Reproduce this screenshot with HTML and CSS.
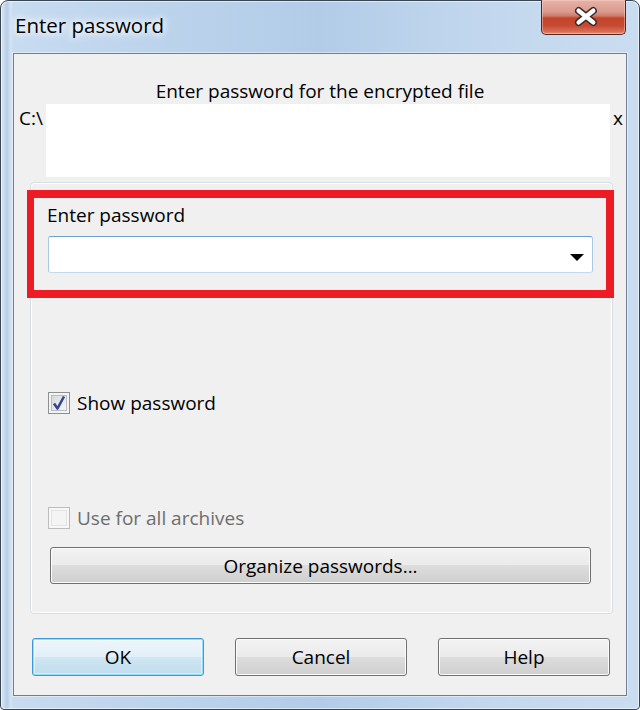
FILE: index.html
```html
<!DOCTYPE html>
<html lang="en">
<head>
<meta charset="utf-8">
<title>Enter password</title>
<link rel="stylesheet" href="styles.css">
</head>
<body>
<div class="window">
  <div class="titlebar">
    <div class="title">Enter password</div>
    <div class="close">
      <svg width="85" height="35" viewBox="0 0 85 35">
        <path d="M37.5 10.5 L52.5 22.5 M52.5 10.5 L37.5 22.5" stroke="#3a2c2a" stroke-width="7.5" stroke-linecap="round" fill="none"/>
        <path d="M37.5 10.5 L52.5 22.5 M52.5 10.5 L37.5 22.5" stroke="#ffffff" stroke-width="4.5" stroke-linecap="round" fill="none"/>
      </svg>
    </div>
  </div>
  <div class="client">
    <div class="instruction">Enter password for the encrypted file</div>
    <div class="path-row">
      <span class="path-text">C:\</span>
      <div class="redact"></div>
      <span class="path-text">x</span>
    </div>
    <div class="group">
      <div class="highlight">
        <div class="label">Enter password</div>
        <div class="combo">
          <svg class="arrow" width="14" height="7" viewBox="0 0 14 7"><polygon points="0,0 14,0 7,7" fill="#000"/></svg>
        </div>
      </div>
      <div class="check first">
        <span class="box">
          <svg width="20" height="20" viewBox="0 0 20 20"><path d="M5 10.5 L8.5 15.5 L15 3.5" stroke="#34488a" stroke-width="2.6" fill="none" stroke-linejoin="round"/></svg>
        </span>
        <span>Show password</span>
      </div>
      <div class="check second disabled">
        <span class="box"></span>
        <span>Use for all archives</span>
      </div>
      <button class="btn organize">Organize passwords...</button>
    </div>
    <div class="buttons">
      <button class="btn default">OK</button>
      <button class="btn">Cancel</button>
      <button class="btn">Help</button>
    </div>
  </div>
</div>
</body>
</html>
```
FILE: styles.css
```css
html, body {
  margin: 0;
  padding: 0;
  background: #ffffff;
}

body {
  font-family: "Open Sans", "Noto Sans", sans-serif;
}

.window {
  width: 640px;
  height: 710px;
  box-sizing: border-box;
  border: 1px solid #3a4552;
  border-radius: 8px 8px 4px 4px;
  padding: 0 12px 13px;
  display: flex;
  flex-direction: column;
  background:
    linear-gradient(90deg, rgba(255,255,255,0.35) 0px, rgba(255,255,255,0) 3px, rgba(0,40,90,0.08) 6px, rgba(255,255,255,0.25) 10px, rgba(255,255,255,0) 12px),
    linear-gradient(90deg, #c8dcf1 0%, #bcd3ec 25%, #b2cce8 50%, #c2d7ee 75%, #cadcf0 100%);
  box-shadow: inset 0 0 0 1px rgba(255,255,255,0.55);
}

.titlebar {
  height: 52px;
  display: flex;
  justify-content: space-between;
  align-items: flex-start;
}

.title {
  margin: 10px 0 0 2px;
  font-size: 20.5px;
  line-height: 28px;
  color: #000;
  text-shadow: 0 0 6px #fff, 0 0 10px rgba(255,255,255,0.9), 0 0 14px rgba(255,255,255,0.8);
}

.close {
  width: 85px;
  height: 35px;
  margin: -1px 1px 0 0;
  box-sizing: border-box;
  border: 1px solid #55271e;
  border-top: none;
  border-radius: 0 0 5px 5px;
  background: linear-gradient(#e6b3a8 0%, #d99a8c 35%, #cf7a68 47%, #c2432b 53%, #c64a31 75%, #d86b52 92%, #e4907a 100%);
  box-shadow: inset 0 0 0 1px rgba(255,215,205,0.45);
  display: flex;
}

.client {
  flex: 1;
  display: flex;
  flex-direction: column;
  border: 1px solid #6f7f90;
  background: #f0f0f0;
  box-shadow: 0 0 0 1px rgba(255,255,255,0.45);
  font-size: 19px;
  line-height: 26px;
  color: #000;
}

.instruction {
  margin-top: 24px;
  text-align: center;
}

.path-row {
  display: flex;
  align-items: flex-start;
  height: 73px;
  padding: 0 3px 0 5px;
}

.path-text {
  margin-top: 1px;
}

.redact {
  flex: 1;
  height: 73px;
  margin: 0 3px;
  background: #ffffff;
}

.group {
  margin: 5px 13px 0 16px;
  border: 1px solid #d5dfe5;
  border-radius: 4px;
  box-shadow: inset 0 0 0 1px #ffffff;
  display: flex;
  flex-direction: column;
  padding-bottom: 29px;
}

.highlight {
  margin: 7px -2px 0 -4px;
  border: 8px solid #ed1c24;
  border-left-width: 7px;
  padding: 4px 13px 17px 13px;
}

.combo {
  margin: 8px 0 0 1px;
  height: 37px;
  box-sizing: border-box;
  border: 1px solid;
  border-color: #6f9ed2 #a9c8e8 #c3d9ee #a9c8e8;
  border-radius: 3px;
  background: #ffffff;
  display: flex;
  justify-content: flex-end;
  align-items: flex-start;
  padding-right: 8px;
}

.arrow {
  margin-top: 17px;
}

.check {
  display: flex;
  align-items: center;
  gap: 7px;
  margin-left: 17px;
}

.check.first {
  margin-top: 92px;
}

.check.second {
  margin-top: 89px;
}

.box {
  width: 22px;
  height: 22px;
  box-sizing: border-box;
  border: 1px solid #8e8f8f;
  background: linear-gradient(135deg, #cdd1d7 0%, #e9ebee 55%, #f8f8f8 100%);
  box-shadow: inset 0 0 0 2px #f3f3f3, inset 0 0 0 3px #b9bdc3;
  display: flex;
}

.disabled {
  color: #6d6d6d;
}

.disabled .box {
  border-color: #bcbcbc;
  background: #f4f4f4;
  box-shadow: inset 0 0 0 2px #f7f7f7, inset 0 0 0 3px #e3e3e3;
}

.btn {
  box-sizing: border-box;
  border: 1px solid #707070;
  border-radius: 3px;
  background: linear-gradient(#f2f2f2 0%, #ebebeb 49%, #dddddd 50%, #cfcfcf 100%);
  box-shadow: inset 0 0 0 1px #fcfcfc;
  font: inherit;
  color: #000;
  display: flex;
  align-items: center;
  justify-content: center;
  padding: 0;
}

.organize {
  margin: 16px 21px 0 19px;
  height: 37px;
}

.buttons {
  display: flex;
  justify-content: space-between;
  margin-top: 24px;
  padding: 0 16px 0 18px;
}

.buttons .btn {
  width: 172px;
  height: 38px;
}

.btn.default {
  border-color: #3c9bd6;
  background: linear-gradient(#eef6fb 0%, #e2eff8 49%, #d0e6f3 50%, #bfdced 100%);
  box-shadow: inset 0 0 0 1px #95dcfa, inset 0 0 0 2px rgba(255,255,255,0.45);
}
```
